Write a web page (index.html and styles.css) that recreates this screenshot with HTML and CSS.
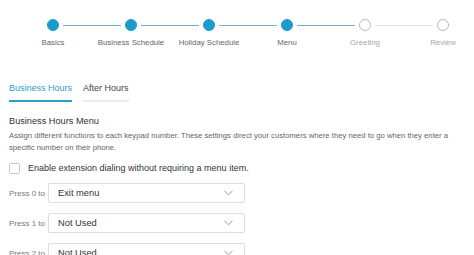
FILE: index.html
```html
<!DOCTYPE html>
<html lang="en">
<head>
    <meta charset="UTF-8">
    <title>Menu</title>
    <link rel="stylesheet" href="styles.css">
</head>
<body>
    <ul class="steps">
        <li class="done"><div class="track"><i class="bar blank"></i><b class="dot"></b><i class="bar on"></i></div><span>Basics</span></li>
        <li class="done"><div class="track"><i class="bar on"></i><b class="dot"></b><i class="bar on"></i></div><span>Business Schedule</span></li>
        <li class="done"><div class="track"><i class="bar on"></i><b class="dot"></b><i class="bar on"></i></div><span>Holiday Schedule</span></li>
        <li class="done"><div class="track"><i class="bar on"></i><b class="dot"></b><i class="bar on"></i></div><span>Menu</span></li>
        <li><div class="track"><i class="bar on"></i><b class="dot"></b><i class="bar"></i></div><span>Greeting</span></li>
        <li><div class="track"><i class="bar"></i><b class="dot"></b><i class="bar blank"></i></div><span>Review</span></li>
    </ul>

    <ul class="tabs">
        <li class="active">Business Hours</li>
        <li>After Hours</li>
    </ul>

    <div class="section">
        <h3>Business Hours Menu</h3>
        <p class="desc">Assign different functions to each keypad number. These settings direct your customers where they need to go when they enter a specific number on their phone.</p>
        <label class="check"><span class="box"></span>Enable extension dialing without requiring a menu item.</label>
        <div class="keys">
            <div class="key"><span class="press">Press 0 to</span><div class="select">Exit menu<svg width="9" height="6" viewBox="0 0 9 6"><path d="M0.5 0.8 L4.5 4.8 L8.5 0.8" fill="none" stroke="#999" stroke-width="1"/></svg></div></div>
            <div class="key"><span class="press">Press 1 to</span><div class="select">Not Used<svg width="9" height="6" viewBox="0 0 9 6"><path d="M0.5 0.8 L4.5 4.8 L8.5 0.8" fill="none" stroke="#999" stroke-width="1"/></svg></div></div>
            <div class="key"><span class="press">Press 2 to</span><div class="select">Not Used<svg width="9" height="6" viewBox="0 0 9 6"><path d="M0.5 0.8 L4.5 4.8 L8.5 0.8" fill="none" stroke="#999" stroke-width="1"/></svg></div></div>
        </div>
    </div>
</body>
</html>
```

FILE: styles.css
```css
*{
    margin: 0;
    padding: 0;
    list-style: none;
    box-sizing: border-box;
}
body{
    background-color: #fff;
    font-family: "Liberation Sans", Arial, sans-serif;
    color: #333;
    overflow: hidden;
}
.steps{
    display: grid;
    grid-template-columns: repeat(6, 78px);
    padding: 19px 0 0 14px;
}
.steps li{
    display: flex;
    flex-direction: column;
    align-items: center;
}
.track{
    display: flex;
    align-items: center;
    width: 100%;
    height: 12px;
}
.bar{
    flex: 1;
    height: 1px;
    background-color: #e2e2e2;
}
.bar:first-child{
    margin-right: 4px;
}
.bar:last-child{
    margin-left: 4px;
}
.bar.on{
    background-color: #6eb2c3;
}
.bar.blank{
    background-color: transparent;
}
.dot{
    width: 12px;
    height: 12px;
    border-radius: 50%;
    border: 1px solid #b9b9b9;
    background-color: #fff;
}
.done .dot{
    border-color: #1a9bcc;
    background-color: #1a9bcc;
}
.steps span{
    margin-top: 6px;
    font-size: 7.8px;
    line-height: 11px;
    color: #a9a9a9;
    white-space: nowrap;
}
.steps .done span{
    color: #666;
}
.tabs{
    display: flex;
    gap: 11px;
    margin: 34px 0 0 9px;
}
.tabs li{
    font-size: 9px;
    line-height: 12px;
    padding-bottom: 6px;
    border-bottom: 2px solid #ececec;
    color: #444;
}
.tabs .active{
    color: #2b9fc6;
    border-bottom-color: #2b9fc6;
}
.section{
    padding: 0 9px;
}
.section h3{
    margin-top: 13px;
    font-size: 9.2px;
    line-height: 12px;
    font-weight: normal;
    color: #333;
}
.desc{
    margin-top: 3px;
    font-size: 7.7px;
    line-height: 12px;
    color: #666;
}
.check{
    display: flex;
    align-items: center;
    gap: 8px;
    margin-top: 8px;
    font-size: 9px;
    line-height: 12px;
    color: #333;
}
.box{
    width: 11px;
    height: 11px;
    border: 1px solid #c9c9c9;
    border-radius: 2px;
}
.keys{
    display: flex;
    flex-direction: column;
    gap: 10px;
    margin-top: 9px;
}
.key{
    display: flex;
    align-items: center;
}
.press{
    width: 39px;
    font-size: 8px;
    color: #777;
}
.select{
    display: flex;
    align-items: center;
    justify-content: space-between;
    width: 197px;
    height: 20px;
    padding: 0 11px 0 9px;
    border: 1px solid #dedede;
    border-radius: 2px;
    font-size: 9.3px;
    color: #333;
}
```
